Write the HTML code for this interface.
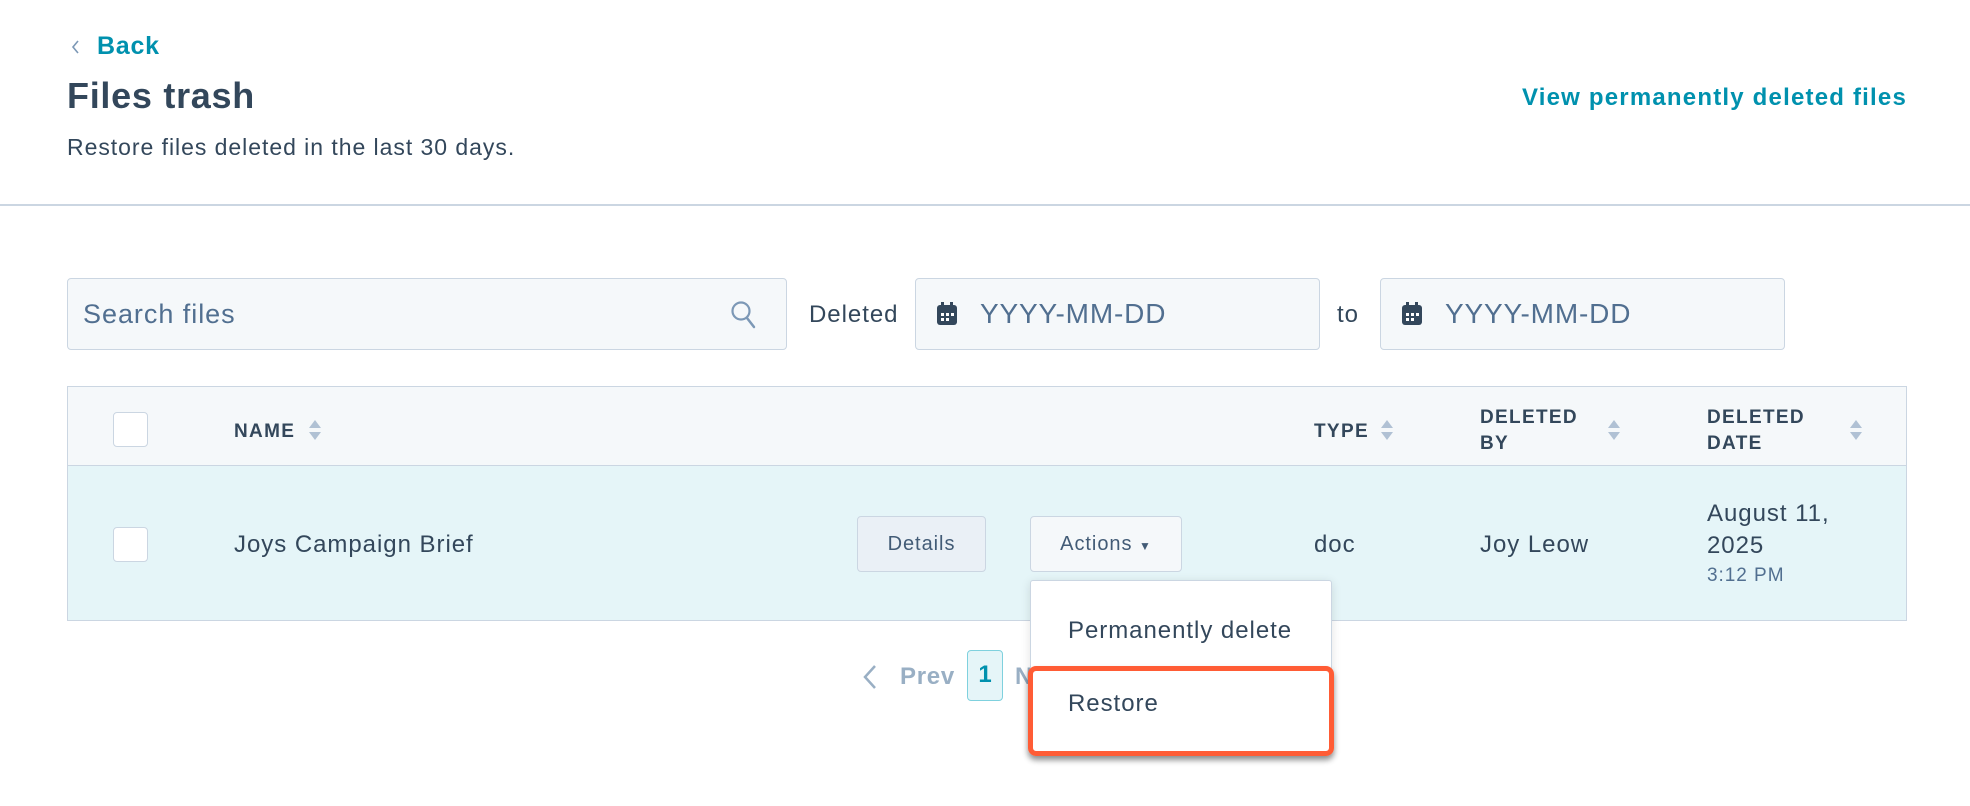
<!DOCTYPE html>
<html><head><meta charset="utf-8"><style>
*{box-sizing:border-box;margin:0;padding:0}
body{width:1970px;height:806px;background:#fff;font-family:"Liberation Sans",sans-serif;color:#33475b;position:relative;overflow:hidden;letter-spacing:.06em}
.a{position:absolute;white-space:nowrap}
.box{position:absolute;background:#f5f8fa;border:1.5px solid #cbd6e2;border-radius:4px}
.hd{font-weight:bold;font-size:19px;letter-spacing:.07em;line-height:26px}
.cb{position:absolute;width:35px;height:35px;background:#fff;border:1.5px solid #cbd6e2;border-radius:4px}
.sort{position:absolute;width:12px}
.sort:before,.sort:after{content:"";position:absolute;left:0;border-left:6px solid transparent;border-right:6px solid transparent}
.sort:before{top:0;border-bottom:8px solid #b0c1d4}
.sort:after{top:12px;border-top:8px solid #b0c1d4}
.t{font-size:24px}
</style></head><body>
<svg class="a" style="left:70px;top:39px" width="10" height="16" viewBox="0 0 10 16"><path d="M8 2L3 8l5 6" fill="none" stroke="#7c98b6" stroke-width="1.6"/></svg>
<div class="a" style="left:97px;top:32px;font-size:25px;font-weight:bold;color:#0091ae;letter-spacing:.03em">Back</div>
<div class="a" style="left:67px;top:75px;font-size:36px;font-weight:bold;letter-spacing:.02em">Files trash</div>
<div class="a" style="left:67px;top:134px;font-size:23px">Restore files deleted in the last 30 days.</div>
<div class="a" style="right:63px;top:84px;font-size:24px;font-weight:bold;color:#0091ae;letter-spacing:.05em">View permanently deleted files</div>
<div class="a" style="left:0;top:204px;width:1970px;height:1.5px;background:#cbd6e2"></div>

<div class="box" style="left:67px;top:278px;width:720px;height:72px"></div>
<div class="a t" style="left:83px;top:299px;font-size:27px;color:#516f90">Search files</div>
<svg class="a" style="left:730px;top:300px" width="28" height="30" viewBox="0 0 28 30"><circle cx="11" cy="11" r="8.5" fill="none" stroke="#7c98b6" stroke-width="2.2"/><path d="M17 18l7 9" stroke="#7c98b6" stroke-width="2.5" stroke-linecap="round"/></svg>
<div class="a t" style="left:809px;top:301px">Deleted</div>
<div class="box" style="left:915px;top:278px;width:405px;height:72px"></div>
<div class="box" style="left:1380px;top:278px;width:405px;height:72px"></div>
<div class="a t" style="left:1337px;top:301px">to</div>
<svg class="a" style="left:936px;top:302px" width="22" height="24" viewBox="0 0 22 24"><rect x="1" y="3" width="20" height="20" rx="3" fill="#33475b"/><rect x="5" y="0" width="3" height="6" fill="#33475b"/><rect x="14" y="0" width="3" height="6" fill="#33475b"/><g fill="#fff"><rect x="5" y="11" width="3" height="3"/><rect x="10" y="11" width="3" height="3"/><rect x="15" y="11" width="3" height="3"/><rect x="5" y="16" width="3" height="3"/><rect x="10" y="16" width="3" height="3"/></g></svg>
<div class="a" style="left:980px;top:298px;font-size:28px;color:#516f90;letter-spacing:.03em">YYYY-MM-DD</div>
<svg class="a" style="left:1401px;top:302px" width="22" height="24" viewBox="0 0 22 24"><rect x="1" y="3" width="20" height="20" rx="3" fill="#33475b"/><rect x="5" y="0" width="3" height="6" fill="#33475b"/><rect x="14" y="0" width="3" height="6" fill="#33475b"/><g fill="#fff"><rect x="5" y="11" width="3" height="3"/><rect x="10" y="11" width="3" height="3"/><rect x="15" y="11" width="3" height="3"/><rect x="5" y="16" width="3" height="3"/><rect x="10" y="16" width="3" height="3"/></g></svg>
<div class="a" style="left:1445px;top:298px;font-size:28px;color:#516f90;letter-spacing:.03em">YYYY-MM-DD</div>

<div class="a" style="left:67px;top:386px;width:1840px;height:235px;border:1.5px solid #cbd6e2;background:#e5f5f8"></div>
<div class="a" style="left:68px;top:387px;width:1838px;height:79px;background:#f5f8fa;border-bottom:1.5px solid #cbd6e2"></div>
<div class="cb" style="left:113px;top:412px"></div>
<div class="a hd" style="left:234px;top:419px">NAME</div><div class="sort" style="left:309px;top:420px"></div>
<div class="a hd" style="left:1314px;top:419px">TYPE</div><div class="sort" style="left:1381px;top:420px"></div>
<div class="a hd" style="left:1480px;top:405px">DELETED<br>BY</div><div class="sort" style="left:1608px;top:420px"></div>
<div class="a hd" style="left:1707px;top:405px">DELETED<br>DATE</div><div class="sort" style="left:1850px;top:420px"></div>

<div class="cb" style="left:113px;top:527px"></div>
<div class="a t" style="left:234px;top:531px">Joys Campaign Brief</div>
<div class="a" style="left:857px;top:516px;width:129px;height:56px;background:#eaf0f6;border:1.5px solid #cbd6e2;border-radius:4px;font-size:20px;color:#425b76;text-align:center;line-height:55px">Details</div>
<div class="a" style="left:1030px;top:516px;width:152px;height:56px;background:#f5f8fa;border:1.5px solid #cbd6e2;border-radius:4px;font-size:20px;color:#425b76;text-align:center;line-height:55px">Actions <span style="font-size:12px">&#9660;</span></div>
<div class="a t" style="left:1314px;top:531px">doc</div>
<div class="a t" style="left:1480px;top:531px">Joy Leow</div>
<div class="a t" style="left:1707px;top:498px;line-height:32px">August 11,<br>2025</div>
<div class="a" style="left:1707px;top:565px;font-size:19px;color:#516f90">3:12 PM</div>

<svg class="a" style="left:862px;top:664px" width="16" height="26" viewBox="0 0 16 26"><path d="M13 2L3 13l10 11" fill="none" stroke="#99afc4" stroke-width="2.5"/></svg>
<div class="a" style="left:900px;top:663px;font-size:24px;font-weight:bold;color:#99afc4;letter-spacing:.03em">Prev</div>
<div class="a" style="left:967px;top:650px;width:36px;height:51px;background:#e5f5f8;border:1.5px solid #7fd1de;border-radius:4px;font-size:24px;font-weight:bold;color:#0091ae;text-align:center;line-height:48px;letter-spacing:0">1</div>
<div class="a" style="left:1015px;top:663px;font-size:24px;font-weight:bold;color:#99afc4">N</div>

<div class="a" style="left:1030px;top:580px;width:302px;height:175px;background:#fff;border:1.5px solid #cbd6e2;border-radius:3px;box-shadow:0 2px 10px rgba(0,0,0,.12)"></div>
<div class="a t" style="left:1068px;top:617px">Permanently delete</div>
<div class="a" style="left:1028px;top:666px;width:306px;height:90px;border:5px solid #ff5c35;border-radius:8px;box-shadow:0 4px 6px rgba(0,0,0,.4)"></div>
<div class="a t" style="left:1068px;top:690px">Restore</div>
</body></html>
